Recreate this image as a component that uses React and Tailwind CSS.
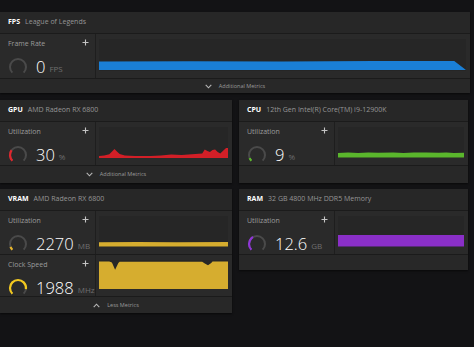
import React from 'react';

const font = "font-['Open_Sans','Noto_Sans',sans-serif]";

function Gauge({ pct, color }) {
  // 270° arc, open at the bottom
  const d = 'M 4.34 15.66 A 8 8 0 1 1 15.66 15.66';
  return (
    <svg width="20" height="20" viewBox="0 0 20 20" className="shrink-0">
      <path d={d} fill="none" stroke="#4a4a4a" strokeWidth="2" pathLength="100" />
      {pct > 0 && (
        <path d={d} fill="none" stroke={color} strokeWidth="2.2" pathLength="100" strokeDasharray={`${pct} 100`} />
      )}
    </svg>
  );
}

function Plus() {
  return (
    <svg width="7" height="7" viewBox="0 0 7 7" className="absolute right-[6px] top-[5px]">
      <path d="M3.5 0.5v6M0.5 3.5h6" stroke="#c4c4c4" strokeWidth="1.1" />
    </svg>
  );
}

function Metric({ label, value, unit, pct, color, h, chart }) {
  return (
    <div className={`flex border-b border-[#1b1b1b] ${h}`}>
      <div className="relative w-[96px] shrink-0 border-r border-[#1e1e1e] bg-[#2a2a2a] pl-2 pt-[5px]">
        <div className="text-[7px] leading-[9px] text-[#9c9c9c]">{label}</div>
        <Plus />
        <div className="mt-[9px] flex items-center">
          <Gauge pct={pct} color={color} />
          <span className="ml-[8px] text-[16.5px] font-light leading-none text-white">{value}</span>
          <span className="ml-[4px] mt-[3px] text-[8px] leading-none text-[#6f6f6f]">{unit}</span>
        </div>
      </div>
      <div className="flex-1 bg-[#2a2a2a] pl-[3px] pr-[4px] pt-[5px] pb-[7px]">
        <div className="h-full w-full bg-[#262626]">{chart}</div>
      </div>
    </div>
  );
}

function Area({ points, color, vh }) {
  return (
    <svg width="100%" height="100%" viewBox={`0 0 100 ${vh}`} preserveAspectRatio="none" className="block">
      <polygon points={points} fill={color} />
    </svg>
  );
}

function Footer({ text, up, empty, h }) {
  return (
    <div className={`flex items-center justify-center gap-[7px] bg-[#282828] ${h}`}>
      {!empty && (
        <>
          <svg width="7" height="5" viewBox="0 0 7 5">
            <path d={up ? 'M0.7 4.2 3.5 1.2 6.3 4.2' : 'M0.7 0.8 3.5 3.8 6.3 0.8'} fill="none" stroke="#b8b8b8" strokeWidth="1.1" />
          </svg>
          <span className="text-[5.5px] text-[#9a9a9a]">{text}</span>
        </>
      )}
    </div>
  );
}

function Panel({ kind, name, className, children }) {
  return (
    <div className={`overflow-hidden bg-[#262626] shadow-[0_1px_2px_rgba(0,0,0,0.6)] ${className}`}>
      <div className="flex h-[22px] items-center gap-[5px] border-b border-[#1b1b1b] bg-[#272727] pl-2">
        <span className="text-[7px] font-bold text-white">{kind}</span>
        <span className="text-[7px] text-[#969696]">{name}</span>
      </div>
      {children}
    </div>
  );
}

export default function App() {
  return (
    <div className={`h-[347px] w-[474px] overflow-hidden bg-[#131315] pt-[12px] ${font}`}>
      <Panel kind="FPS" name="League of Legends" className="w-[470px]">
        <Metric
          label="Frame Rate" value="0" unit="FPS" pct={0} color="#1a80d8" h="h-[45px]"
          chart={<Area vh={32} color="#1a7fd6" points="0,22.5 25,22.2 50,22.4 75,22 96.8,22.1 100,31 0,31" />}
        />
        <Footer text="Additional Metrics" h="h-[14px]" />
      </Panel>

      <div className="mt-[7px] flex gap-[7px]">
        <div className="flex w-[232px] flex-col gap-[6px]">
          <Panel kind="GPU" name="AMD Radeon RX 6800">
            <Metric
              label="Utilization" value="30" unit="%" pct={30} color="#e0262d" h="h-[44px]"
              chart={<Area vh={31} color="#d21f27" points="0,29 4,28.6 8,27.2 10.5,24 12,22 13.5,24 16,27 20,28.6 28,29 40,29 48,28.6 56,27.6 64,28 72,27.2 80,26.4 82,22.5 84,24 86,25 88,23 90,22.5 92,25 94,26.5 96,24 98.5,21 100,21 100,31 0,31" />}
            />
            <Footer text="Additional Metrics" h="h-[17px]" />
          </Panel>

          <Panel kind="VRAM" name="AMD Radeon RX 6800">
            <Metric
              label="Utilization" value="2270" unit="MB" pct={9} color="#e6b52c" h="h-[44px]"
              chart={<Area vh={32} color="#d6ad2f" points="0,27 30,26.8 60,27 100,26.8 100,31.5 0,31.5" />}
            />
            <Metric
              label="Clock Speed" value="1988" unit="MHz" pct={86} color="#f2c81e" h="h-[42px]"
              chart={<Area vh={30} color="#d6ad2f" points="0,1.5 8,1.5 10,2.5 12.5,10 15,3 16,1.8 60,1.8 80,1.8 82,3.5 84.5,5.5 87,3 88,1.5 100,1.5 100,30 0,30" />}
            />
            <Footer text="Less Metrics" up h="h-[16px]" />
          </Panel>
        </div>

        <div className="flex w-[229px] flex-col gap-[6px]">
          <Panel kind="CPU" name="12th Gen Intel(R) Core(TM) i9-12900K">
            <Metric
              label="Utilization" value="9" unit="%" pct={8} color="#5cb82c" h="h-[44px]"
              chart={<Area vh={31} color="#5ab62c" points="0,26 8,25.6 16,26 24,25.5 32,25.8 44,25.6 52,26 60,25.6 70,25.4 80,25.8 86,25.5 92,26 100,25.8 100,30.5 0,30.5" />}
            />
            <Footer empty h="h-[17px]" />
          </Panel>

          <Panel kind="RAM" name="32 GB 4800 MHz DDR5 Memory">
            <Metric
              label="Utilization" value="12.6" unit="GB" pct={39} color="#8f35d6" h="h-[44px]"
              chart={<Area vh={32} color="#8a2fc8" points="0,19.5 100,19.5 100,31.5 0,31.5" />}
            />
            <Footer empty h="h-[15px]" />
          </Panel>
        </div>
      </div>
    </div>
  );
}
